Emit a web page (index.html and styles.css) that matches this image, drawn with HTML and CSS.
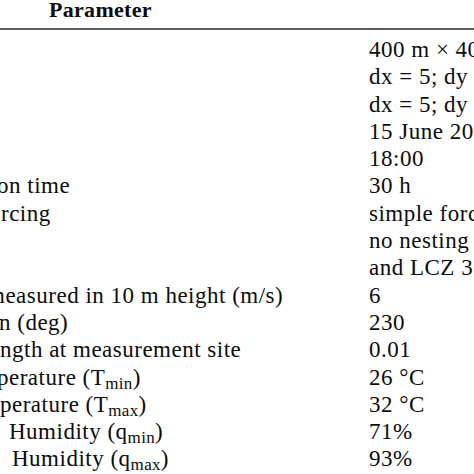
FILE: index.html
```html
<!DOCTYPE html>
<html lang="en">
<head>
<meta charset="utf-8">
<title>Parameter table</title>
<link rel="stylesheet" href="styles.css">
</head>
<body>
<div class="table">
  <div class="head">
    <div class="hcell">Parameter</div>
  </div>
  <div class="rule"></div>
  <div class="body">
    <div class="row"><div class="label"></div><div class="value">400 m × 400 m × 40 m</div></div>
    <div class="row"><div class="label"></div><div class="value">dx = 5; dy = 5; dz = 2</div></div>
    <div class="row"><div class="label"></div><div class="value">dx = 5; dy = 5; dz = 2</div></div>
    <div class="row"><div class="label"></div><div class="value">15 June 2021</div></div>
    <div class="row"><div class="label"></div><div class="value">18:00</div></div>
    <div class="row"><div class="label cut-o">on time</div><div class="value">30 h</div></div>
    <div class="row"><div class="label in-1">rcing</div><div class="value">simple forcing</div></div>
    <div class="row"><div class="label"></div><div class="value">no nesting</div></div>
    <div class="row"><div class="label"></div><div class="value">and LCZ 3</div></div>
    <div class="row"><div class="label cut-m">measured in 10 m height (m/s)</div><div class="value">6</div></div>
    <div class="row"><div class="label cut-n">n (deg)</div><div class="value">230</div></div>
    <div class="row"><div class="label">ngth at measurement site</div><div class="value">0.01</div></div>
    <div class="row"><div class="label cut-p">perature (T<sub>min</sub>)</div><div class="value">26 °C</div></div>
    <div class="row"><div class="label">perature (T<sub>max</sub>)</div><div class="value">32 °C</div></div>
    <div class="row"><div class="label in-9">Humidity (q<sub>min</sub>)</div><div class="value">71%</div></div>
    <div class="row"><div class="label in-12">Humidity (q<sub>max</sub>)</div><div class="value">93%</div></div>
  </div>
</div>
</body>
</html>
```

FILE: styles.css
```css
html, body {
  margin: 0;
  padding: 0;
  background: #ffffff;
  overflow: hidden;
}
body {
  width: 474px;
  height: 474px;
  font-family: "Liberation Serif", "Times New Roman", serif;
  font-size: 23px;
  color: #0c0c0c;
}
.table {
  display: flex;
  flex-direction: column;
}
.head {
  display: flex;
  height: 20px;
  line-height: 20px;
  margin-bottom: 8px;
}
.hcell {
  font-size: 22px;
  font-weight: bold;
  padding-left: 49px;
  letter-spacing: 0.3px;
  white-space: nowrap;
}
.rule {
  height: 2px;
  background: #5e5e5e;
}
.body {
  display: flex;
  flex-direction: column;
  padding-top: 6px;
}
.row {
  display: grid;
  grid-template-columns: 369px 1fr;
  height: 27.3px;
  line-height: 27.3px;
  letter-spacing: 0.5px;
  white-space: nowrap;
}
.label {
  overflow: hidden;
}
.value {
  overflow: visible;
}
.cut-o { text-indent: -3px; }
.cut-m { text-indent: -13px; }
.cut-n { text-indent: -1px; }
.cut-p { text-indent: -3px; }
.in-1 { text-indent: 1px; }
.in-9 { text-indent: 9px; }
.in-12 { text-indent: 12px; }
sub {
  font-size: 0.74em;
  line-height: 0;
  letter-spacing: 0.3px;
  vertical-align: -0.26em;
}
```
